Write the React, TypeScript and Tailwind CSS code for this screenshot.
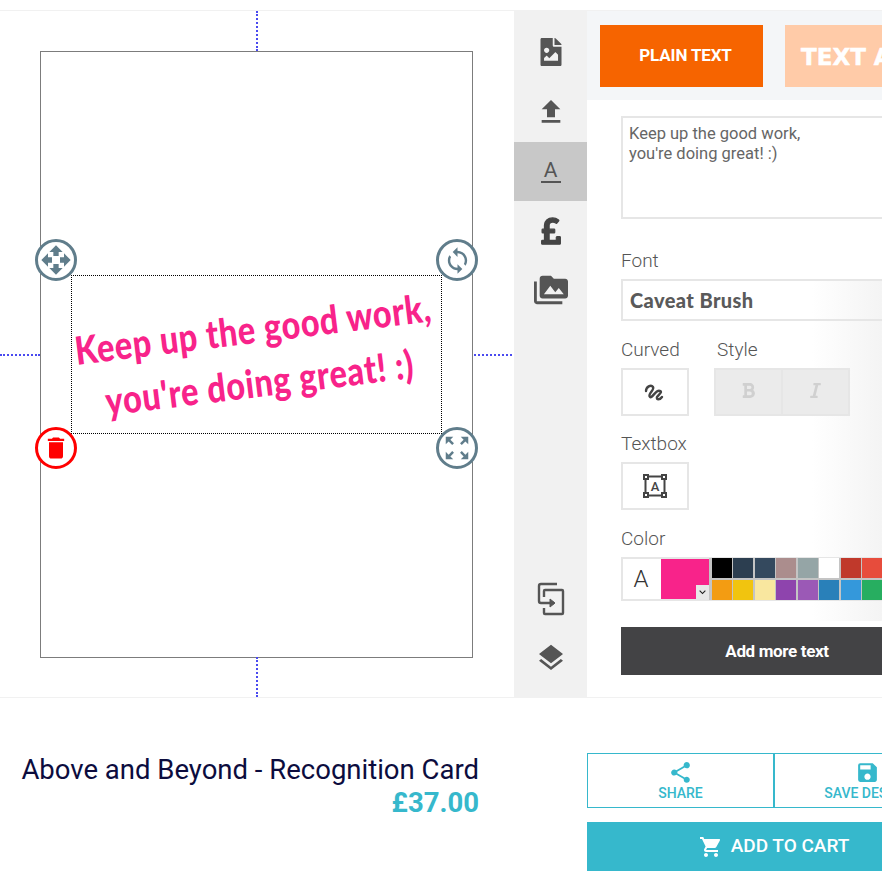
import { FaBold, FaFileImage, FaItalic, FaPoundSign } from 'react-icons/fa';
import {
  MdDelete,
  MdFileUpload,
  MdKeyboardArrowDown,
  MdLayers,
  MdOpenWith,
  MdPermMedia,
  MdSave,
  MdShare,
  MdShoppingCart,
  MdSync,
  MdZoomOutMap,
} from 'react-icons/md';

const swatches = [
  'bg-[#000000]', 'bg-[#2c3e50]', 'bg-[#34495e]', 'bg-[#ab8d8d]', 'bg-[#95a5a6]', 'bg-[#ffffff]', 'bg-[#c0392b]', 'bg-[#e74c3c]',
  'bg-[#f39c12]', 'bg-[#f1c40f]', 'bg-[#f9e79f]', 'bg-[#8e44ad]', 'bg-[#9b59b6]', 'bg-[#2980b9]', 'bg-[#3498db]', 'bg-[#27ae60]',
];

function Label({ children }: { children: React.ReactNode }) {
  return <div className="text-[19px] font-light leading-[21px] text-[#555]">{children}</div>;
}

function Canvas() {
  return (
    <div className="relative h-full w-[514px] shrink-0 pl-[40px] pt-[40px]">
      {/* guides */}
      <div className="absolute left-[256px] top-0 h-[40px] border-l-2 border-dotted border-[#4a4af0]" />
      <div className="absolute bottom-0 left-[256px] h-[40px] border-l-2 border-dotted border-[#4a4af0]" />
      <div className="absolute left-0 top-[343px] w-[40px] border-t-2 border-dotted border-[#4a4af0]" />
      <div className="absolute left-[474px] top-[343px] w-[38px] border-t-2 border-dotted border-[#4a4af0]" />

      <div className="h-[607px] w-[433px] border border-solid border-[#7c7c7c]" />

      {/* selection box */}
      <div className="absolute left-[71px] top-[264px] flex h-[159px] w-[371px] items-center justify-center border border-dotted border-black">
        <div className="-rotate-[7deg] scale-x-[0.83] whitespace-nowrap text-center font-['Lato',sans-serif] text-[39px] font-black leading-[54px] tracking-[0.8px] text-[#f8238a]">
          Keep up the good work,
          <br />
          you're doing great! :)
        </div>
      </div>

      <div className="absolute left-[35px] top-[228px] flex h-[42px] w-[42px] items-center justify-center rounded-full border-[3px] border-[#607d8b] bg-white text-[#607d8b]">
        <MdOpenWith size={32} />
      </div>
      <div className="absolute left-[436px] top-[228px] flex h-[42px] w-[42px] items-center justify-center rounded-full border-[3px] border-[#607d8b] bg-white text-[#607d8b]">
        <MdSync size={29} />
      </div>
      <div className="absolute left-[35px] top-[416px] flex h-[42px] w-[42px] items-center justify-center rounded-full border-[3px] border-[#ff0000] bg-white text-[#ff0000]">
        <MdDelete size={28} />
      </div>
      <div className="absolute left-[436px] top-[416px] flex h-[42px] w-[42px] items-center justify-center rounded-full border-[3px] border-[#607d8b] bg-white text-[#607d8b]">
        <MdZoomOutMap size={30} />
      </div>
    </div>
  );
}

function Sidebar() {
  return (
    <div className="flex h-full w-[73px] shrink-0 flex-col items-stretch bg-[#f1f1f1] text-[#555]">
      <div className="flex h-[71px] items-center justify-center pt-[10px]">
        <FaFileImage size={28} />
      </div>
      <div className="flex h-[60px] items-center justify-center">
        <MdFileUpload size={32} />
      </div>
      <div className="flex h-[59px] flex-col items-center justify-center bg-[#c8c8c8]">
        <span className="font-['Roboto',sans-serif] text-[21px] leading-[20px]">A</span>
        <span className="mt-[1px] h-[2px] w-[20px] bg-[#555]" />
      </div>
      <div className="flex h-[59px] items-center justify-center text-[#444]">
        <FaPoundSign size={30} stroke="currentColor" strokeWidth={20} />
      </div>
      <div className="flex h-[59px] items-center justify-center">
        <MdPermMedia size={34} />
      </div>
      <div className="flex-1" />
      <div className="flex h-[60px] items-center justify-center pb-[22px]">
        <svg width="30" height="35" viewBox="10 4 30 35" fill="none" stroke="#555" strokeWidth="2.4">
          <path d="M31 7H15a2 2 0 0 0-2 2v15a2 2 0 0 0 2 2h13" />
          <path d="M24 22l5 4-5 4z" fill="#555" strokeWidth="1" />
          <path d="M18 20v-6a1 1 0 0 1 1-1h17a1 1 0 0 1 1 1v22a1 1 0 0 1-1 1H19a1 1 0 0 1-1-1v-5" />
        </svg>
      </div>
      <div className="flex h-[58px] items-center justify-center pb-[20px]">
        <MdLayers size={32} />
      </div>
    </div>
  );
}

function Panel() {
  return (
    <div className="relative h-full flex-1 overflow-hidden font-['Roboto',sans-serif]">
      <div className="flex h-[89px] w-[400px] items-center gap-[22px] bg-[#f4f6f8] pl-[13px]">
        <div className="flex h-[62px] w-[163px] items-center justify-center bg-[#f66400] pl-[8px] text-[17px] font-bold tracking-[-0.15px] text-white">
          PLAIN TEXT
        </div>
        <div className="flex h-[62px] w-[163px] shrink-0 items-center whitespace-nowrap bg-[#ffcba8] pl-[16px] pt-[4px] font-['DejaVu_Sans',sans-serif] text-[23px] font-bold text-white [-webkit-text-stroke:0.5px_white]">
          TEXT A
        </div>
      </div>

      {/* soft shadow on the right edge */}
      <div className="absolute right-0 top-[270px] h-[340px] w-[70px] bg-gradient-to-r from-white to-[#f4f4f4]" />

      <div className="relative ml-[34px] w-[312px] pt-[16px]">
        <div className="h-[103px] w-full border-2 border-[#e6e6e6] px-[6px] pt-[6px] text-[16.5px] leading-[20px] text-[#666]">
          Keep up the good work,
          <br />
          you're doing great! :)
        </div>

        <div className="mt-[31px]">
          <Label>Font</Label>
        </div>
        <div className="mt-[8px] flex h-[42px] items-center border-2 border-[#e6e6e6] px-[7px] font-['Lato',sans-serif] text-[20px] font-black tracking-[0.4px] text-[#5a5a5a]">
          Caveat Brush
        </div>

        <div className="mt-[18px] flex gap-[28px]">
          <div className="w-[68px]">
            <Label>Curved</Label>
            <div className="mt-[8px] flex h-[48px] w-[68px] items-center justify-center border-2 border-[#e6e6e6] bg-white">
              <svg width="30" height="30" viewBox="0 0 30 30" fill="none" stroke="#444" strokeWidth="2.4" strokeLinecap="round" strokeLinejoin="round">
                <path d="M6 14c0-4 5-7 7-4 2 3-6 7-3 10 2 2 6-8 10-6 3 1-2 4-3 6-1 3 3 3 5 0" />
              </svg>
            </div>
          </div>
          <div>
            <Label>Style</Label>
            <div className="-ml-[3px] mt-[8px] flex h-[48px] w-[136px] border-2 border-[#e6e6e6] bg-[#ebebeb] text-[#d0d0d0]">
              <div className="flex flex-1 items-center justify-center border-r-2 border-[#e6e6e6] pb-[3px]">
                <FaBold size={17} />
              </div>
              <div className="flex flex-1 items-center justify-center pb-[3px]">
                <FaItalic size={17} />
              </div>
            </div>
          </div>
        </div>

        <div className="mt-[17px]">
          <Label>Textbox</Label>
        </div>
        <div className="mt-[8px] flex h-[48px] w-[68px] items-center justify-center border-2 border-[#e6e6e6] bg-white">
          <svg width="24" height="24" viewBox="0 0 24 24" fill="none" stroke="#444" strokeWidth="2">
            <rect x="2.500" y="2.500" width="19" height="19" />
            <rect x="1" y="1" width="4" height="4" fill="#fff" />
            <rect x="19" y="1" width="4" height="4" fill="#fff" />
            <rect x="1" y="19" width="4" height="4" fill="#fff" />
            <rect x="19" y="19" width="4" height="4" fill="#fff" />
            <text x="12" y="16.500" textAnchor="middle" fontSize="13" fontWeight="500" fontFamily="Roboto, sans-serif" fill="#444" stroke="none">A</text>
          </svg>
        </div>

        <div className="mt-[18px]">
          <Label>Color</Label>
        </div>
        <div className="mt-[8px] flex h-[44px] w-[312px] border-2 border-[#e6e6e6] bg-white">
          <div className="flex w-[38px] shrink-0 items-center justify-center pr-[2px] text-[24px] font-light leading-none text-[#333]">A</div>
          <div className="relative w-[48px] shrink-0 bg-[#f8238a]">
            <div className="absolute bottom-0 right-0 flex h-[14px] w-[13px] items-center justify-center bg-[#e8e8e8] text-[#222]">
              <MdKeyboardArrowDown size={14} />
            </div>
          </div>
          <div className="-my-[1px] grid h-[42px] w-[222px] shrink-0 grid-cols-[repeat(8,19.6px)] grid-rows-[20px_20px] gap-x-[1.9px] gap-y-[2px] bg-[#c4c4c4] pl-[3px]">
            {swatches.map((color, i) => (
              <div key={i} className={color} />
            ))}
          </div>
        </div>

        <div className="mt-[26px] flex h-[48px] items-center justify-center bg-[#434345] pt-[1px] text-[17px] font-bold tracking-[-0.35px] text-white">
          Add more text
        </div>
      </div>
    </div>
  );
}

export default function App() {
  return (
    <div className="h-[882px] w-[882px] overflow-hidden bg-white font-['Roboto',sans-serif]">
      <div className="h-[11px] border-b border-[#f1f1f1]" />
      <div className="flex h-[687px] border-b border-[#f1f1f1]">
        <Canvas />
        <Sidebar />
        <Panel />
      </div>

      <div className="flex">
        <div className="w-[480px] shrink-0 pr-[1px] pt-[54px] text-right">
          <div className="text-[27.5px] leading-[35px] text-[#0c0c3e]">Above and Beyond - Recognition Card</div>
          <div className="text-[27.5px] font-bold leading-[32px] text-[#36b8cc]">£37.00</div>
        </div>
        <div className="ml-[107px] w-[374px] shrink-0 pt-[55px]">
          <div className="flex h-[55px] border border-[#36b8cc] text-[14px] font-medium text-[#36b8cc]">
            <div className="flex w-[187px] flex-col items-center justify-center border-r-2 border-[#36b8cc] leading-[16px]">
              <MdShare size={25} />
              <span>SHARE</span>
            </div>
            <div className="flex flex-1 flex-col items-center justify-center leading-[16px]">
              <MdSave size={25} />
              <span>SAVE DESIGN</span>
            </div>
          </div>
          <div className="mt-[14px] flex h-[49px] items-center justify-center gap-[8px] bg-[#36b8cc] text-[19px] font-medium text-white">
            <MdShoppingCart size={24} />
            ADD TO CART
          </div>
        </div>
      </div>
    </div>
  );
}
